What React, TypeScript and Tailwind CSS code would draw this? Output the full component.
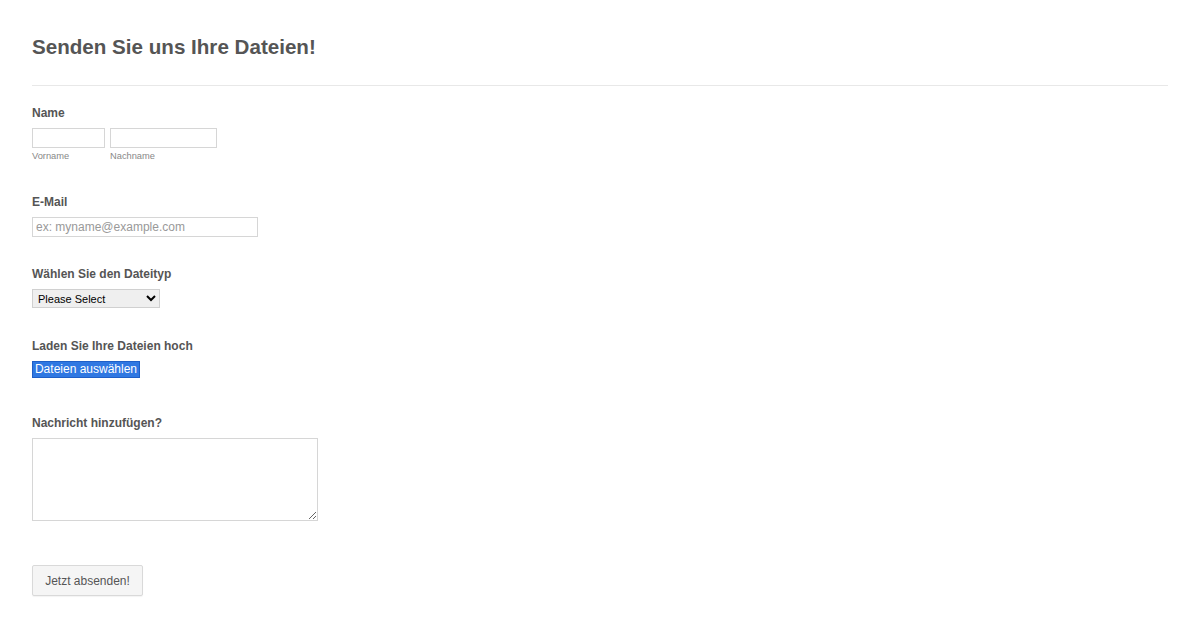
import React from 'react';

const labelClass = 'block text-[12px] leading-[14px] font-bold text-[#555]';

const App: React.FC = () => {
  return (
    <div className="min-h-screen bg-white pt-[35px] px-8 font-['Liberation_Sans',Arial,sans-serif] text-[#555]">
      <h1 className="text-[20.6px] leading-[24px] font-bold text-[#555]">Senden Sie uns Ihre Dateien!</h1>
      <div className="mt-[26px] border-t border-[#e8e8e8]" />

      <form className="flex flex-col items-start" onSubmit={e => e.preventDefault()}>
        {/* Name */}
        <label className={`${labelClass} mt-[20px]`}>Name</label>
        <div className="mt-2 flex gap-[5px]">
          <div className="flex flex-col">
            <input type="text" className="h-[20px] w-[73px] border border-[#d6d6d6] bg-white outline-none" />
            <span className="mt-[2px] text-[9.3px] leading-[12px] text-[#888]">Vorname</span>
          </div>
          <div className="flex flex-col">
            <input type="text" className="h-[20px] w-[107px] border border-[#d6d6d6] bg-white outline-none" />
            <span className="mt-[2px] text-[9.3px] leading-[12px] text-[#888]">Nachname</span>
          </div>
        </div>

        {/* E-Mail */}
        <label className={`${labelClass} mt-[33px]`}>E-Mail</label>
        <input
          type="email"
          placeholder="ex: myname@example.com"
          className="mt-2 h-[20px] w-[226px] border border-[#d6d6d6] bg-white px-[3px] text-[12px] text-[#555] placeholder:text-[#999] outline-none"
        />

        {/* Dateityp */}
        <label className={`${labelClass} mt-[30px]`}>Wählen Sie den Dateityp</label>
        <select className="mt-2 h-[19px] w-[128px] border border-[#d0d0d0] bg-[#efefef] pl-[1px] text-[11px] text-black outline-none">
          <option>Please Select</option>
          <option>Bild</option>
          <option>Dokument</option>
          <option>Video</option>
        </select>

        {/* Upload */}
        <label className={`${labelClass} mt-[31px]`}>Laden Sie Ihre Dateien hoch</label>
        <button
          type="button"
          className="mt-2 h-[17px] w-[108px] border border-[#1f5fc7] bg-[#3078e2] text-[12px] leading-[15px] text-white"
        >
          Dateien auswählen
        </button>

        {/* Nachricht */}
        <label className={`${labelClass} mt-[38px]`}>Nachricht hinzufügen?</label>
        <textarea className="mt-2 h-[83px] w-[286px] border border-[#d6d6d6] bg-white outline-none" />

        {/* Submit */}
        <button
          type="submit"
          className="mt-[44px] h-[31px] w-[111px] rounded-[2px] border border-[#d9d9d9] bg-[#f5f5f5] text-[12px] text-[#555] shadow-[0_1px_1px_rgba(0,0,0,0.05)]"
        >
          Jetzt absenden!
        </button>
      </form>
    </div>
  );
};

export default App;
